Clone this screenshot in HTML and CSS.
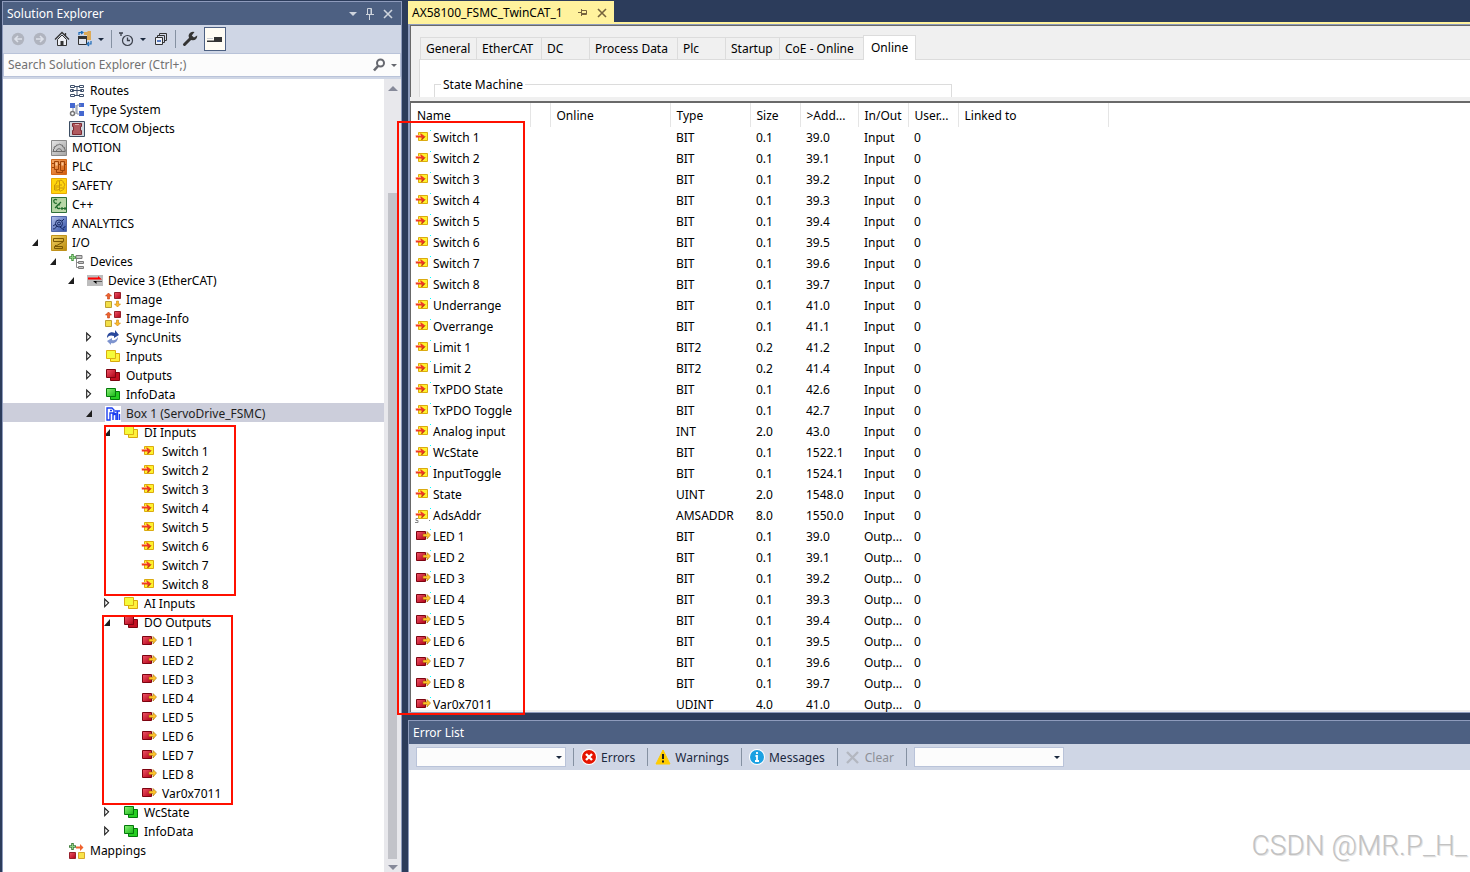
FILE: index.html
```html
<!DOCTYPE html>
<html lang="en">
<head>
<meta charset="utf-8">
<title>Solution Explorer</title>
<link rel="stylesheet" href="styles.css">
</head>
<body>
<svg class="defs" aria-hidden="true">
  <defs>
    <linearGradient id="gy" x2="1" y2="1"><stop offset="0" stop-color="#fff83a"/><stop offset="1" stop-color="#ffec3c"/></linearGradient>
    <linearGradient id="gr" x2="1" y2="1"><stop offset="0" stop-color="#f0566a"/><stop offset="1" stop-color="#b00014"/></linearGradient>
    <linearGradient id="gg" x2="1" y2="1"><stop offset="0" stop-color="#8ff07a"/><stop offset="1" stop-color="#12b812"/></linearGradient>
    <linearGradient id="gm" x2="1" y2="1"><stop offset="0" stop-color="#e6e6e6"/><stop offset="1" stop-color="#a4a4a4"/></linearGradient>
    <linearGradient id="go" x2="1" y2="1"><stop offset="0" stop-color="#f5a765"/><stop offset="1" stop-color="#d35c0c"/></linearGradient>
    <linearGradient id="gc" x2="1" y2="1"><stop offset="0" stop-color="#a9cf9c"/><stop offset="1" stop-color="#c2dcae"/></linearGradient>
    <linearGradient id="gb" x2="1" y2="1"><stop offset="0" stop-color="#b5c2ea"/><stop offset="1" stop-color="#2e4da6"/></linearGradient>
    <linearGradient id="gi" x2="1" y2="1"><stop offset="0" stop-color="#f3d264"/><stop offset="1" stop-color="#b98a0c"/></linearGradient>
  </defs>
  <symbol id="open" viewBox="0 0 16 16"><path d="M6 4v7H0z" fill="#1e1e1e"/></symbol>
  <symbol id="closed" viewBox="0 0 16 16"><path d="M.7 3v7.600L4.600 6.800z" fill="#fff" stroke="#1e1e1e" stroke-width="1.100"/></symbol>
  <symbol id="down" viewBox="0 0 8 8"><path d="M1 3h6L4 6z" fill="currentColor"/></symbol>
  <symbol id="routes" viewBox="0 0 16 16"><g fill="none" stroke="#3d4f6b"><path d="M1.500 2.500h4v2h-4zM10.500 2.500h4v2h-4zM6 3.500h4M8 4v8M3 7.500h10M1.500 6.500h3v2h-3zM11.500 6.500h3v2h-3zM1.500 11.500h4v2h-4zM10.500 11.500h4v2h-4zM6 12.500h4"/></g></symbol>
  <symbol id="types" viewBox="0 0 16 16"><path d="M1 1h5v5H1zM10 1h5v4h-5zM10 9h5v5h-5z" fill="#4568d0"/><path d="M4 6v4M12 3H8v9h3M7 3v9" fill="none" stroke="#8b94a5"/><circle cx="3.500" cy="11.500" r="2" fill="none" stroke="#777" stroke-width="1.500"/></symbol>
  <symbol id="tccom" viewBox="0 0 16 16"><path d="M.5.5h15v15H.5z" fill="#cfd5dc" stroke="#3c4d63"/><path d="M3.500 2.500h9v3h-1v4h1v4h-9v-4h1v-4h-1z" fill="#b05a60" stroke="#7c2a32"/><path d="M6 3.500h4" stroke="#e0b5b5"/></symbol>
  <symbol id="motion" viewBox="0 0 16 16"><path d="M.5.5h15v15H.5z" fill="url(#gm)" stroke="#8a8a8a"/><path d="M1.500 11.500h13M2.500 11V9l1-.5-.5-1.500 2-.5.500-1.500h2L8.500 4l1.500 1 1.500.2.200 1.600 1.800.7-.2 1.500.8.5V11M5.500 11c0-3 5-3 5 0" fill="none" stroke="#6c6c6c"/></symbol>
  <symbol id="plc" viewBox="0 0 16 16"><path d="M.5.5h15v15H.5z" fill="url(#go)" stroke="#d3691c"/><path d="M3.500 2.500h4v8h-4zM9.500 2.500h4v9h-4zM1 4.500h2M1 8.500h2M8 5.500h1M5.500 11v2.500h6V12M14 5.500h1" fill="none" stroke="#9e4308"/><path d="M4.500 3.500h2v3h-2zM10.500 3.500h2v3h-2z" fill="#f8c596"/></symbol>
  <symbol id="safety" viewBox="0 0 16 16"><path d="M.5.5h15v15H.5z" fill="#ffd50c" stroke="#e8ab05"/><path d="M8.500 2.500c2-1 4 .5 3.500 2 2 .5 2 3 1 4 .5 2-1 4-2.500 4-1 1-2 .5-2 0zM8 3C6 2 5 4 6 5L3.500 7v5H7l1.500-1M5 7v4M7 7v3M9 7h2M9 10h3" fill="none" stroke="#c9940a"/></symbol>
  <symbol id="cpp" viewBox="0 0 16 16"><path d="M.5.5h15v15H.5z" fill="url(#gc)" stroke="#2f7038"/><path d="M6 3C4 1.500 2 3 3 5c.5 1.500 2 1.500 3 1M4 11l6-6M9 8c-2-1-3.500 0-3 2 .5 2 2 2 3 1M9.500 11.500h3M11 10v3M12.500 11.500h3M14 10v3" fill="none" stroke="#1f6b2b" stroke-width="1.200"/></symbol>
  <symbol id="analytics" viewBox="0 0 16 16"><path d="M.5.5h15v15H.5z" fill="url(#gb)" stroke="#5268a8"/><path d="M2 13c3 0 3-2 4-4M9 11l4 3M11 5l2-2M12 12c2 0 2-2 2-2M2 10l3-2" fill="none" stroke="#16275f"/><circle cx="8" cy="7.500" r="3.500" fill="none" stroke="#16275f"/><circle cx="8" cy="7.500" r="1.500" fill="none" stroke="#16275f"/></symbol>
  <symbol id="io" viewBox="0 0 16 16"><path d="M.5.5h15v15H.5z" fill="url(#gi)" stroke="#c0921c"/><path d="M2.500 3.500h10v3h-10zM12 7l-7 4M3.500 11.500h8v2h-8zM5 11l-1-1" fill="none" stroke="#7a5804"/></symbol>
  <symbol id="devices" viewBox="0 0 16 16"><path d="M7 1.500h6v3H7zM9.500 7.500h5v2h-5zM9.500 12.500h5v2h-5z" fill="#c5c5c5" stroke="#7a7a7a"/><path d="M7.500 5v8.500H9M8 8.500h1" fill="none" stroke="#888"/><path d="M3.500 0v7M0 3.500h7" stroke="#43903f" stroke-width="2.400"/><path d="M3.500 1v5M1 3.500h5" stroke="#8ed084"/></symbol>
  <symbol id="ecat" viewBox="0 0 16 16"><path d="M0 2h16v11H0z" fill="#bdbdbd"/><path d="M1 4.500h10V3l4 3.500H1z" fill="#f00"/><path d="M15 8.500H9.500v2.500L6 8h9z" fill="#000"/></symbol>
  <symbol id="image" viewBox="0 0 16 16"><path d="M9.500.5h6v6h-6z" fill="url(#gr)" stroke="#97202c"/><path d="M.5 9.500h6v6h-6z" fill="#f2df48" stroke="#bda032"/><path d="M3.500 1L6.500 4h-2v3h-2V4h-2z" fill="#f0622e" stroke="#c33e12" stroke-width=".6"/><path d="M12.500 15l3-3h-2V9h-2v3h-2z" fill="#ffbb2c" stroke="#c98710" stroke-width=".6"/></symbol>
  <symbol id="sync" viewBox="0 0 16 16"><path d="M2 8C2 3 6 1 10 3V0l4 5-5 3V6C6 5 4 5 2 8z" fill="#29489c"/><path d="M13 7c0 5-4 7-7 6v2L2 11l5-3v2c2 .8 4 0 6-3z" fill="#7e94cf"/></symbol>
  <symbol id="yel" viewBox="0 0 16 16"><path d="M5.500 4.500h9v8h-9z" fill="url(#gy)" stroke="#d6a80c"/><path d="M1.500 1.500h9v8h-9z" fill="#f5fb3a" stroke="#dcae12"/></symbol>
  <symbol id="red" viewBox="0 0 16 16"><path d="M5.500 4.500h9v8h-9z" fill="#c41022" stroke="#7d0410"/><path d="M1.500 1.500h9v8h-9z" fill="url(#gr)" stroke="#7d0410"/></symbol>
  <symbol id="grn" viewBox="0 0 16 16"><path d="M5.500 4.500h9v8h-9z" fill="#26cf22" stroke="#04780a"/><path d="M1.500 1.500h9v8h-9z" fill="url(#gg)" stroke="#04780a"/></symbol>
  <symbol id="box" viewBox="0 0 16 16"><path d="M0 0h16v16H0z" fill="#fff"/><path d="M2 14V2h5l2 2v3H5v7zM5 4.500h2M8 14V7.500M8 9l3-1.500V14M10 5h5M12.500 5v9M14.500 8v6" fill="none" stroke="#1a3df0" stroke-width="1.400"/></symbol>
  <symbol id="in" viewBox="0 0 16 16"><path d="M3.500 2.500h9v8h-9z" fill="#fff22e" stroke="#dbaa10"/><path d="M.8 5h4.700V3L10 6.500 6.500 10V7.500H.8z" fill="#ee3a24"/><path d="M1 5.500h5" stroke="#ff9a72"/><path d="M10 6.500L6.500 10" stroke="#a8200c"/></symbol>
  <symbol id="out" viewBox="0 0 16 16"><path d="M1.500 2.500h9v8h-9z" fill="url(#gr)" stroke="#7d0410"/><path d="M8 5h4V2.500L15.500 6 12 10V7.500H8z" fill="#ffc52c" stroke="#a86c08" stroke-width=".6"/></symbol>
  <symbol id="map" viewBox="0 0 16 16"><path d="M.5 9.500h6v6h-6z" fill="url(#gr)" stroke="#97202c"/><path d="M9.500 9.500h6v6h-6z" fill="#f8e34a" stroke="#d8a82c"/><path d="M7 3.500h4V1l3.500 3.500L11 8V5.500H7z" fill="#f0622e"/><path d="M3.500 0v7M0 3.500h7" stroke="#43803f" stroke-width="2.600"/><path d="M3.500 1v5M1 3.500h5" stroke="#8ed084"/></symbol>
</svg>

<aside class="explorer">
  <header class="titlebar">
    <h1 class="title">Solution Explorer</h1>
    <button class="cap" aria-label="Window menu"><svg width="8" height="8"><path d="M0 2h8L4 6z" fill="currentColor"/></svg></button>
    <button class="cap" aria-label="Pin"><svg width="8" height="12" fill="none" stroke="currentColor"><path d="M1.500 6V.5h4V6M5 1v5M0 6.500h8M3.500 7v5"/></svg></button>
    <button class="cap" aria-label="Close"><svg width="10" height="10" stroke="currentColor" stroke-width="1.600"><path d="M1 1l8 8M9 1L1 9"/></svg></button>
  </header>
  <div class="toolbar">
    <button class="tool" aria-label="Back" disabled><svg width="16" height="16"><circle cx="8" cy="8" r="6.200" fill="#b0b4bf"/><path d="M12 8H5M8 5L5 8l3 3" fill="none" stroke="#dde1ea" stroke-width="1.600"/></svg></button>
    <button class="tool" aria-label="Forward" disabled><svg width="16" height="16"><circle cx="8" cy="8" r="6.200" fill="#b0b4bf"/><path d="M4 8h7M8 5l3 3-3 3" fill="none" stroke="#dde1ea" stroke-width="1.600"/></svg></button>
    <button class="tool" aria-label="Home"><svg width="16" height="16"><path d="M1 8.500L8 1.500l7 7M11.500 2v3" fill="none" stroke="#333" stroke-width="1.300"/><path d="M3.500 8.500V14.500h9V8.500L8 4z" fill="#eceef3" stroke="#333"/><path d="M6.500 10h3v4.500h-3z" fill="#333"/></svg></button>
    <button class="tool pair" aria-label="Sync view"><svg width="16" height="16"><path d="M8 1h3l1-1h3v9h-4V4H8z" fill="#dcaa58"/><path d="M2.500 5.500h8v8h-8z" fill="#dfe3ec" stroke="#333"/><path d="M2 5h9v3H2z" fill="#333"/><path d="M3 4V1.500h3M5 0l2 1.500L5 3M15 10v3h-3M13 11l-2 2 2 2" fill="none" stroke="#1c6bb8" stroke-width="1.200"/></svg><svg width="8" height="8"><use href="#down"/></svg></button>
    <span class="sep"></span>
    <button class="tool pair" aria-label="Pending filter"><svg width="16" height="16"><circle cx="9.500" cy="9.500" r="5" fill="none" stroke="#3a3f4a" stroke-width="1.200"/><path d="M9.500 6.500v3H12M1 2h4M3 2v3" fill="none" stroke="#3a3f4a" stroke-width="1.300"/></svg><svg width="8" height="8"><use href="#down"/></svg></button>
    <button class="tool" aria-label="Collapse all"><svg width="16" height="16" fill="none" stroke="#333"><path d="M6.500 4V2.500h7v7H12M4.500 6V4.500h7v7H10"/><path d="M2.500 6.500h7v7h-7z" fill="#eef1f7"/><path d="M4 10h4" stroke="#1c4ba8" stroke-width="1.400"/></svg></button>
    <span class="sep"></span>
    <button class="tool" aria-label="Properties"><svg width="16" height="16"><path d="M2.500 13.500L9 7" stroke="#333" stroke-width="3" stroke-linecap="round"/><path d="M12.500 1a4.300 4.300 0 1 0 2.700 3.500L12 6.500 9.800 4.500z" fill="#333"/></svg></button>
    <button class="tool checked" aria-label="Preview" aria-pressed="true"><svg width="16" height="16"><path d="M0 9.500h7V6h8v5H0z" fill="#333"/><path d="M0 7.500h6" stroke="#c9ccd2"/></svg></button>
  </div>
  <div class="search">
    <input class="query" type="text" aria-label="Search Solution Explorer" placeholder="Search Solution Explorer (Ctrl+;)">
    <button class="find" aria-label="Search"><svg width="14" height="14"><circle cx="8.500" cy="5" r="3.500" fill="none" stroke="#66686f" stroke-width="2"/><path d="M6 8l-4 4.500" stroke="#66686f" stroke-width="2.600"/></svg><svg width="8" height="8"><use href="#down"/></svg></button>
  </div>
  <div class="treewrap">
    <ul class="tree">
      <li class="l1"><i></i><svg><use href="#routes"/></svg>Routes</li>
      <li class="l1"><i></i><svg><use href="#types"/></svg>Type System</li>
      <li class="l1"><i></i><svg><use href="#tccom"/></svg>TcCOM Objects</li>
      <li class="l0"><i></i><svg><use href="#motion"/></svg>MOTION</li>
      <li class="l0"><i></i><svg><use href="#plc"/></svg>PLC</li>
      <li class="l0"><i></i><svg><use href="#safety"/></svg>SAFETY</li>
      <li class="l0"><i></i><svg><use href="#cpp"/></svg>C++</li>
      <li class="l0"><i></i><svg><use href="#analytics"/></svg>ANALYTICS</li>
      <li class="l0"><i><svg><use href="#open"/></svg></i><svg><use href="#io"/></svg>I/O</li>
      <li class="l1"><i><svg><use href="#open"/></svg></i><svg><use href="#devices"/></svg>Devices</li>
      <li class="l2"><i><svg><use href="#open"/></svg></i><svg><use href="#ecat"/></svg>Device 3 (EtherCAT)</li>
      <li class="l3"><i></i><svg><use href="#image"/></svg>Image</li>
      <li class="l3"><i></i><svg><use href="#image"/></svg>Image-Info</li>
      <li class="l3"><i><svg><use href="#closed"/></svg></i><svg><use href="#sync"/></svg>SyncUnits</li>
      <li class="l3"><i><svg><use href="#closed"/></svg></i><svg><use href="#yel"/></svg>Inputs</li>
      <li class="l3"><i><svg><use href="#closed"/></svg></i><svg><use href="#red"/></svg>Outputs</li>
      <li class="l3"><i><svg><use href="#closed"/></svg></i><svg><use href="#grn"/></svg>InfoData</li>
      <li class="l3 selected"><i><svg><use href="#open"/></svg></i><svg><use href="#box"/></svg>Box 1 (ServoDrive_FSMC)</li>
      <li class="l4"><i><svg><use href="#open"/></svg></i><svg><use href="#yel"/></svg>DI Inputs</li>
      <li class="l5"><i></i><svg><use href="#in"/></svg>Switch 1</li>
      <li class="l5"><i></i><svg><use href="#in"/></svg>Switch 2</li>
      <li class="l5"><i></i><svg><use href="#in"/></svg>Switch 3</li>
      <li class="l5"><i></i><svg><use href="#in"/></svg>Switch 4</li>
      <li class="l5"><i></i><svg><use href="#in"/></svg>Switch 5</li>
      <li class="l5"><i></i><svg><use href="#in"/></svg>Switch 6</li>
      <li class="l5"><i></i><svg><use href="#in"/></svg>Switch 7</li>
      <li class="l5"><i></i><svg><use href="#in"/></svg>Switch 8</li>
      <li class="l4"><i><svg><use href="#closed"/></svg></i><svg><use href="#yel"/></svg>AI Inputs</li>
      <li class="l4"><i><svg><use href="#open"/></svg></i><svg><use href="#red"/></svg>DO Outputs</li>
      <li class="l5"><i></i><svg><use href="#out"/></svg>LED 1</li>
      <li class="l5"><i></i><svg><use href="#out"/></svg>LED 2</li>
      <li class="l5"><i></i><svg><use href="#out"/></svg>LED 3</li>
      <li class="l5"><i></i><svg><use href="#out"/></svg>LED 4</li>
      <li class="l5"><i></i><svg><use href="#out"/></svg>LED 5</li>
      <li class="l5"><i></i><svg><use href="#out"/></svg>LED 6</li>
      <li class="l5"><i></i><svg><use href="#out"/></svg>LED 7</li>
      <li class="l5"><i></i><svg><use href="#out"/></svg>LED 8</li>
      <li class="l5"><i></i><svg><use href="#out"/></svg>Var0x7011</li>
      <li class="l4"><i><svg><use href="#closed"/></svg></i><svg><use href="#grn"/></svg>WcState</li>
      <li class="l4"><i><svg><use href="#closed"/></svg></i><svg><use href="#grn"/></svg>InfoData</li>
      <li class="l1"><i></i><svg><use href="#map"/></svg>Mappings</li>
    </ul>
    <div class="scroll"><svg width="10" height="6"><path d="M0 6h10L5 1z" fill="#868999"/></svg><span class="thumb"></span><svg width="10" height="6"><path d="M0 0h10L5 5z" fill="#868999"/></svg></div>
    <span class="mark mark-di"></span>
    <span class="mark mark-do"></span>
  </div>
</aside>

<main class="main">
  <div class="doctabs">
    <div class="doctab"><span>AX58100_FSMC_TwinCAT_1</span>
      <button class="cap" aria-label="Pin tab"><svg width="9" height="8" fill="none" stroke="currentColor"><path d="M0 3.500h3M3.500 0v7M4 1.500h4.500v4H4M4 4.500h4"/></svg></button>
      <button class="cap" aria-label="Close tab"><svg width="10" height="10" stroke="currentColor" stroke-width="1.600"><path d="M1 1l8 8M9 1L1 9"/></svg></button>
    </div>
  </div>
  <section class="doc">
    <div class="props">
      <div class="tabs" role="tablist">
        <button class="tab w56" role="tab">General</button>
        <button class="tab w65" role="tab">EtherCAT</button>
        <button class="tab w48" role="tab">DC</button>
        <button class="tab w88" role="tab">Process Data</button>
        <button class="tab w48" role="tab">Plc</button>
        <button class="tab w54" role="tab">Startup</button>
        <button class="tab w84" role="tab">CoE - Online</button>
        <button class="tab w52 active" role="tab" aria-selected="true">Online</button>
      </div>
      <div class="page"><fieldset class="group"><legend>State Machine</legend></fieldset></div>
    </div>
    <div class="list">
      <table class="vars">
        <colgroup><col class="c119"><col class="c20"><col class="c120"><col class="c80"><col class="c50"><col class="c58"><col class="c50"><col class="c50"><col class="c150"></colgroup>
        <thead><tr><th>Name</th><th></th><th>Online</th><th>Type</th><th>Size</th><th>&gt;Add...</th><th>In/Out</th><th>User...</th><th>Linked to</th></tr></thead>
        <tbody>
          <tr><td><svg><use href="#in"/></svg>Switch 1</td><td></td><td></td><td>BIT</td><td>0.1</td><td>39.0</td><td>Input</td><td>0</td><td></td></tr>
          <tr><td><svg><use href="#in"/></svg>Switch 2</td><td></td><td></td><td>BIT</td><td>0.1</td><td>39.1</td><td>Input</td><td>0</td><td></td></tr>
          <tr><td><svg><use href="#in"/></svg>Switch 3</td><td></td><td></td><td>BIT</td><td>0.1</td><td>39.2</td><td>Input</td><td>0</td><td></td></tr>
          <tr><td><svg><use href="#in"/></svg>Switch 4</td><td></td><td></td><td>BIT</td><td>0.1</td><td>39.3</td><td>Input</td><td>0</td><td></td></tr>
          <tr><td><svg><use href="#in"/></svg>Switch 5</td><td></td><td></td><td>BIT</td><td>0.1</td><td>39.4</td><td>Input</td><td>0</td><td></td></tr>
          <tr><td><svg><use href="#in"/></svg>Switch 6</td><td></td><td></td><td>BIT</td><td>0.1</td><td>39.5</td><td>Input</td><td>0</td><td></td></tr>
          <tr><td><svg><use href="#in"/></svg>Switch 7</td><td></td><td></td><td>BIT</td><td>0.1</td><td>39.6</td><td>Input</td><td>0</td><td></td></tr>
          <tr><td><svg><use href="#in"/></svg>Switch 8</td><td></td><td></td><td>BIT</td><td>0.1</td><td>39.7</td><td>Input</td><td>0</td><td></td></tr>
          <tr><td><svg><use href="#in"/></svg>Underrange</td><td></td><td></td><td>BIT</td><td>0.1</td><td>41.0</td><td>Input</td><td>0</td><td></td></tr>
          <tr><td><svg><use href="#in"/></svg>Overrange</td><td></td><td></td><td>BIT</td><td>0.1</td><td>41.1</td><td>Input</td><td>0</td><td></td></tr>
          <tr><td><svg><use href="#in"/></svg>Limit 1</td><td></td><td></td><td>BIT2</td><td>0.2</td><td>41.2</td><td>Input</td><td>0</td><td></td></tr>
          <tr><td><svg><use href="#in"/></svg>Limit 2</td><td></td><td></td><td>BIT2</td><td>0.2</td><td>41.4</td><td>Input</td><td>0</td><td></td></tr>
          <tr><td><svg><use href="#in"/></svg>TxPDO State</td><td></td><td></td><td>BIT</td><td>0.1</td><td>42.6</td><td>Input</td><td>0</td><td></td></tr>
          <tr><td><svg><use href="#in"/></svg>TxPDO Toggle</td><td></td><td></td><td>BIT</td><td>0.1</td><td>42.7</td><td>Input</td><td>0</td><td></td></tr>
          <tr><td><svg><use href="#in"/></svg>Analog input</td><td></td><td></td><td>INT</td><td>2.0</td><td>43.0</td><td>Input</td><td>0</td><td></td></tr>
          <tr><td><svg><use href="#in"/></svg>WcState</td><td></td><td></td><td>BIT</td><td>0.1</td><td>1522.1</td><td>Input</td><td>0</td><td></td></tr>
          <tr><td><svg><use href="#in"/></svg>InputToggle</td><td></td><td></td><td>BIT</td><td>0.1</td><td>1524.1</td><td>Input</td><td>0</td><td></td></tr>
          <tr><td><svg><use href="#in"/></svg>State</td><td></td><td></td><td>UINT</td><td>2.0</td><td>1548.0</td><td>Input</td><td>0</td><td></td></tr>
          <tr><td><svg><use href="#in"/><path d="M3 10.500H1v2h2v2H0M14 12.500h1" fill="none" stroke="#888"/></svg>AdsAddr</td><td></td><td></td><td>AMSADDR</td><td>8.0</td><td>1550.0</td><td>Input</td><td>0</td><td></td></tr>
          <tr><td><svg><use href="#out"/></svg>LED 1</td><td></td><td></td><td>BIT</td><td>0.1</td><td>39.0</td><td>Outp...</td><td>0</td><td></td></tr>
          <tr><td><svg><use href="#out"/></svg>LED 2</td><td></td><td></td><td>BIT</td><td>0.1</td><td>39.1</td><td>Outp...</td><td>0</td><td></td></tr>
          <tr><td><svg><use href="#out"/></svg>LED 3</td><td></td><td></td><td>BIT</td><td>0.1</td><td>39.2</td><td>Outp...</td><td>0</td><td></td></tr>
          <tr><td><svg><use href="#out"/></svg>LED 4</td><td></td><td></td><td>BIT</td><td>0.1</td><td>39.3</td><td>Outp...</td><td>0</td><td></td></tr>
          <tr><td><svg><use href="#out"/></svg>LED 5</td><td></td><td></td><td>BIT</td><td>0.1</td><td>39.4</td><td>Outp...</td><td>0</td><td></td></tr>
          <tr><td><svg><use href="#out"/></svg>LED 6</td><td></td><td></td><td>BIT</td><td>0.1</td><td>39.5</td><td>Outp...</td><td>0</td><td></td></tr>
          <tr><td><svg><use href="#out"/></svg>LED 7</td><td></td><td></td><td>BIT</td><td>0.1</td><td>39.6</td><td>Outp...</td><td>0</td><td></td></tr>
          <tr><td><svg><use href="#out"/></svg>LED 8</td><td></td><td></td><td>BIT</td><td>0.1</td><td>39.7</td><td>Outp...</td><td>0</td><td></td></tr>
          <tr><td><svg><use href="#out"/></svg>Var0x7011</td><td></td><td></td><td>UDINT</td><td>4.0</td><td>41.0</td><td>Outp...</td><td>0</td><td></td></tr>
        </tbody>
      </table>
    </div>
    <span class="mark mark-vars"></span>
  </section>
  <section class="errors">
    <header class="titlebar"><h2 class="title">Error List</h2></header>
    <div class="errbar">
      <label class="combo"><select aria-label="Scope"><option></option></select><svg width="8" height="8"><use href="#down"/></svg></label>
      <span class="sep"></span>
      <button class="filter"><svg width="16" height="16"><circle cx="8" cy="8" r="8" fill="#fff"/><circle cx="8" cy="8" r="7" fill="#e51400"/><path d="M5 5l6 6M11 5l-6 6" stroke="#fff" stroke-width="2.400"/></svg>Errors</button>
      <span class="sep"></span>
      <button class="filter"><svg width="16" height="16"><path d="M8 1l7 14H1z" fill="#fc0" stroke="#fc0" stroke-linejoin="round"/><path d="M8 5v5M8 11.500v2" stroke="#1e1e1e" stroke-width="2"/></svg>Warnings</button>
      <span class="sep"></span>
      <button class="filter"><svg width="16" height="16"><circle cx="8" cy="8" r="8" fill="#fff"/><circle cx="8" cy="8" r="7" fill="#1ba1e2"/><path d="M8 3v2M6.500 7H8v5M6 12h4" fill="none" stroke="#fff" stroke-width="1.800"/></svg>Messages</button>
      <span class="sep"></span>
      <button class="filter clear" disabled><svg width="16" height="16"><path d="M2 3l11 11M13 3L2 14" stroke="#b3b7c0" stroke-width="2.400"/></svg>Clear</button>
      <span class="sep"></span>
      <label class="combo"><select aria-label="Source"><option></option></select><svg width="8" height="8"><use href="#down"/></svg></label>
    </div>
    <div class="errbody"></div>
  </section>
</main>
<div class="watermark">CSDN @MR.P_H_</div>
</body>
</html>
```
FILE: styles.css
```css
* { box-sizing: border-box; }
body {
  margin: 0;
  height: 100vh;
  display: flex;
  gap: 6px;
  padding-left: 2px;
  overflow: hidden;
  background: #2c3c5b;
  color: #000;
  font: 12px/19px "Noto Sans", "Open Sans", sans-serif;
}
button, input, select { font: inherit; color: inherit; margin: 0; padding: 0; border: 0; background: none; }
svg { display: block; flex: none; }
.defs { position: absolute; width: 0; height: 0; }

.titlebar {
  display: flex;
  align-items: center;
  gap: 9px;
  height: 23px;
  padding: 0 8px 0 4px;
  background: #4d6082;
  color: #fff;
}
.title { flex: 1; margin: 0; font-size: 12px; font-weight: 400; }
.cap { display: flex; color: #ced4dd; }
.sep { width: 1px; height: 18px; background: #8591a2; }

.explorer {
  width: 400px;
  flex: none;
  display: flex;
  flex-direction: column;
  margin-top: 1px;
  border: 1px solid #8e9bbc;
  border-bottom: 0;
}
.toolbar { display: flex; align-items: center; gap: 6px; height: 28px; padding-left: 7px; background: #cfd6e5; color: #1b293e; }
.tool { display: flex; align-items: center; justify-content: center; height: 24px; }
.pair { gap: 5px; }
.checked { width: 22px; background: #fffcf4; border: 1px solid #4d6082; }
.search { display: flex; height: 24px; border: 1px solid #b9c3d9; background: #fcfcfc; }
.query { flex: 1; min-width: 0; padding: 0 0 2px 4px; outline: 0; }
.query::placeholder { color: #717171; opacity: 1; }
.find { display: flex; align-items: center; gap: 4px; padding-right: 2px; color: #66686f; }

.treewrap { position: relative; flex: 1; min-height: 0; display: flex; overflow: hidden; background: #fff; border-top: 2px solid #cfd6e5; }
.tree { flex: 1; margin: 0; padding: 1px 0 0; list-style: none; }
.tree li { display: flex; align-items: center; height: 19px; padding-top: 2px; white-space: nowrap; }
.tree svg { width: 16px; height: 16px; }
.tree li > svg { margin-right: 5px; }
.tree i { width: 19px; flex: none; }
.l0 { padding-left: 29px; }
.l1 { padding-left: 47px; }
.l2 { padding-left: 65px; }
.l3 { padding-left: 83px; }
.l4 { padding-left: 101px; }
.l5 { padding-left: 119px; }
.selected { background: #cccedb; color: #1e1e1e; }
.scroll { width: 17px; display: flex; flex-direction: column; align-items: center; padding: 6px 0 1px; background: #e8e8ec; }
.thumb { flex: 1; width: 9px; margin: 102px 0 6px; background: #c2c3c9; }

.mark { position: absolute; border: 2px solid #ff1000; pointer-events: none; }
.mark-di { left: 101px; top: 346px; width: 132px; height: 171px; }
.mark-do { left: 99px; top: 536px; width: 131px; height: 190px; }
.mark-vars { left: -13px; top: 96px; width: 128px; height: 594px; }

.main { flex: 1; min-width: 0; display: flex; flex-direction: column; }
.doctabs { display: flex; padding-top: 1px; border-bottom: 2px solid #fff29d; }
.doctab { display: flex; align-items: center; gap: 10px; height: 21px; padding: 2px 7px 0 4px; background: #fff29d; }
.doctab span { flex: none; padding-right: 5px; }
.doctab .cap { color: #75633d; }
.doc {
  position: relative;
  flex: 1;
  min-height: 0;
  display: flex;
  flex-direction: column;
  border: solid #8e9bbc;
  border-width: 1px 0 1px 2px;
  background: #f0f0f0;
}
.props { height: 72px; padding: 9px 0 0 8px; border: solid #696969; border-width: 1px 0 0 1px; display: flex; flex-direction: column; }
.tabs { display: flex; align-items: flex-end; height: 25px; padding: 0 1px; }
.tab { height: 23px; border: 1px solid #dcdcdc; border-width: 1px 0 0 1px; padding: 0 0 2px 5px; text-align: left; white-space: nowrap; }
.active { position: relative; height: 25px; background: #fff; border-right-width: 1px; padding: 0 0 2px 7px; }
.w48 { width: 48px; }
.w52 { width: 53px; }
.w54 { width: 54px; }
.w56 { width: 56px; }
.w65 { width: 65px; }
.w84 { width: 84px; }
.w88 { width: 88px; }
.page { flex: 1; margin-top: -1px; padding: 15px 0 0 14px; border: solid #dcdcdc; border-width: 1px 0 0 1px; background: #fff; overflow: hidden; }
.group { width: 518px; height: 40px; margin: 0; padding: 0 0 0 6px; border: 1px solid #dcdcdc; }
.group legend { padding: 0 2px; }
.list { flex: 1; min-height: 0; margin-top: 4px; overflow: hidden; background: #fff; border: solid #696969; border-width: 2px 0 0 1px; box-shadow: inset 0 -2px #f0f0f0; }
.vars { border-collapse: collapse; table-layout: fixed; width: 697px; }
.vars th { height: 24px; padding: 0 0 0 6px; font-weight: 400; text-align: left; border-right: 1px solid #e5e5e5; white-space: nowrap; }
.vars td { height: 21px; padding: 0 0 0 6px; white-space: nowrap; line-height: 17px; }
.vars td:first-child { display: flex; align-items: center; gap: 2px; padding-left: 4px; }
.vars svg { width: 16px; height: 16px; background: linear-gradient(#0ff, #0ff) 15px 0 / 1px 1px no-repeat; }
.c20 { width: 20px; }
.c50 { width: 50px; }
.c58 { width: 58px; }
.c80 { width: 80px; }
.c119 { width: 119px; }
.c120 { width: 120px; }
.c150 { width: 150px; }

.errors { display: flex; flex-direction: column; height: 152px; margin-top: 7px; border: solid #8e9bbc; border-width: 1px 0 0 1px; }
.errbar { display: flex; align-items: center; gap: 7px; height: 26px; padding-left: 7px; background: #cfd6e5; color: #1b293e; }
.combo { display: grid; align-items: center; width: 150px; height: 20px; }
.combo > * { grid-area: 1 / 1; }
.combo select { appearance: none; width: 100%; height: 20px; background: #fcfcfc; border: 1px solid #b9c3d9; }
.combo svg { justify-self: end; margin-right: 3px; }
.filter { display: flex; align-items: center; gap: 4px; padding-right: 5px; }
.clear { color: #8c8f96; }
.errbody { flex: 1; background: #fff; }
.watermark { position: absolute; right: 3px; bottom: 6px; color: #c2c2c2; font: 300 28px/40px Roboto, Arial, sans-serif; text-shadow: 1px 1px #e4e4e4; }
```
